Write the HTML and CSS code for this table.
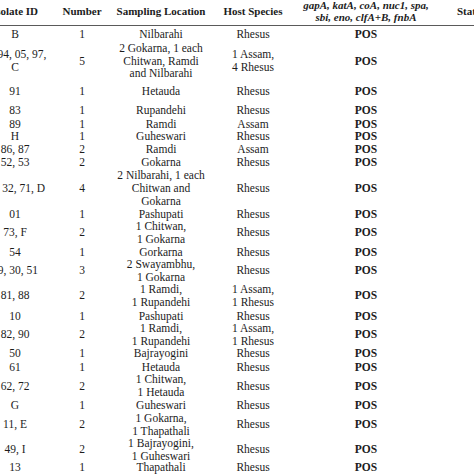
FILE: index.html
```html
<!DOCTYPE html>
<html>
<head>
<meta charset="utf-8">
<link rel="stylesheet" href="styles.css">
</head>
<body>
<div class="sheet">
  <div class="grid">
    <div class="hd">Isolate ID</div>
    <div class="hd">Number</div>
    <div class="hd">Sampling Location</div>
    <div class="hd">Host Species</div>
    <div class="hd genes">gapA, katA, coA, nuc1, spa,<br>sbi, eno, clfA+B, fnbA</div>
    <div class="hd last">Status</div>

    <div>B</div><div>1</div><div>Nilbarahi</div><div>Rhesus</div><div class="pos">POS</div><div></div>
    <div>A, 94, 05, 97,<br>C</div><div>5</div><div>2 Gokarna, 1 each<br>Chitwan, Ramdi<br>and Nilbarahi</div><div>1 Assam,<br>4 Rhesus</div><div class="pos">POS</div><div></div>
    <div>91</div><div>1</div><div>Hetauda</div><div>Rhesus</div><div class="pos">POS</div><div></div>
    <div>83</div><div>1</div><div>Rupandehi</div><div>Rhesus</div><div class="pos">POS</div><div></div>
    <div>89</div><div>1</div><div>Ramdi</div><div>Assam</div><div class="pos">POS</div><div></div>
    <div>H</div><div>1</div><div>Guheswari</div><div>Rhesus</div><div class="pos">POS</div><div></div>
    <div>86, 87</div><div>2</div><div>Ramdi</div><div>Assam</div><div class="pos">POS</div><div></div>
    <div>52, 53</div><div>2</div><div>Gokarna</div><div>Rhesus</div><div class="pos">POS</div><div></div>
    <div>28, 32, 71, D</div><div>4</div><div>2 Nilbarahi, 1 each<br>Chitwan and<br>Gokarna</div><div>Rhesus</div><div class="pos">POS</div><div></div>
    <div>01</div><div>1</div><div>Pashupati</div><div>Rhesus</div><div class="pos">POS</div><div></div>
    <div>73, F</div><div>2</div><div>1 Chitwan,<br>1 Gokarna</div><div>Rhesus</div><div class="pos">POS</div><div></div>
    <div>54</div><div>1</div><div>Gorkarna</div><div>Rhesus</div><div class="pos">POS</div><div></div>
    <div>29, 30, 51</div><div>3</div><div>2 Swayambhu,<br>1 Gokarna</div><div>Rhesus</div><div class="pos">POS</div><div></div>
    <div>81, 88</div><div>2</div><div>1 Ramdi,<br>1 Rupandehi</div><div>1 Assam,<br>1 Rhesus</div><div class="pos">POS</div><div></div>
    <div>10</div><div>1</div><div>Pashupati</div><div>Rhesus</div><div class="pos">POS</div><div></div>
    <div>82, 90</div><div>2</div><div>1 Ramdi,<br>1 Rupandehi</div><div>1 Assam,<br>1 Rhesus</div><div class="pos">POS</div><div></div>
    <div>50</div><div>1</div><div>Bajrayogini</div><div>Rhesus</div><div class="pos">POS</div><div></div>
    <div>61</div><div>1</div><div>Hetauda</div><div>Rhesus</div><div class="pos">POS</div><div></div>
    <div>62, 72</div><div>2</div><div>1 Chitwan,<br>1 Hetauda</div><div>Rhesus</div><div class="pos">POS</div><div></div>
    <div>G</div><div>1</div><div>Guheswari</div><div>Rhesus</div><div class="pos">POS</div><div></div>
    <div>11, E</div><div>2</div><div>1 Gokarna,<br>1 Thapathali</div><div>Rhesus</div><div class="pos">POS</div><div></div>
    <div>49, I</div><div>2</div><div>1 Bajrayogini,<br>1 Guheswari</div><div>Rhesus</div><div class="pos">POS</div><div></div>
    <div>13</div><div>1</div><div>Thapathali</div><div>Rhesus</div><div class="pos">POS</div><div></div>
  </div>
</div>
</body>
</html>
```
FILE: styles.css
```css
html, body {
  margin: 0;
  padding: 0;
  background: #ffffff;
}
body {
  width: 474px;
  height: 474px;
  overflow: hidden;
}
.sheet {
  margin-left: -20px;
  width: 600px;
}
.grid {
  display: grid;
  grid-template-columns: 70px 64px 94px 90px 136px 146px;
  grid-template-rows: 26px 16px 38px 22px 16px 12px 13px 13px 13px 39px 12px 25px 14px 23px 27px 14px 23px 15px 12px 26px 12px 27px 23px 12px;
  font-family: "Liberation Serif", "DejaVu Serif", serif;
  font-size: 11.5px;
  line-height: 12.7px;
  color: #1c1c1c;
}
.grid > div {
  display: flex;
  align-items: center;
  justify-content: center;
  text-align: center;
  white-space: nowrap;
}
.grid > .hd {
  font-weight: bold;
  font-size: 11px;
  border-bottom: 1px solid #5a5a5a;
  padding-bottom: 3px;
  box-sizing: border-box;
  line-height: 12px;
}
.grid > .genes {
  font-style: italic;
}
.grid > .last {
  justify-content: flex-start;
  padding-left: 23px;
}
.pos {
  font-weight: bold;
}
```
